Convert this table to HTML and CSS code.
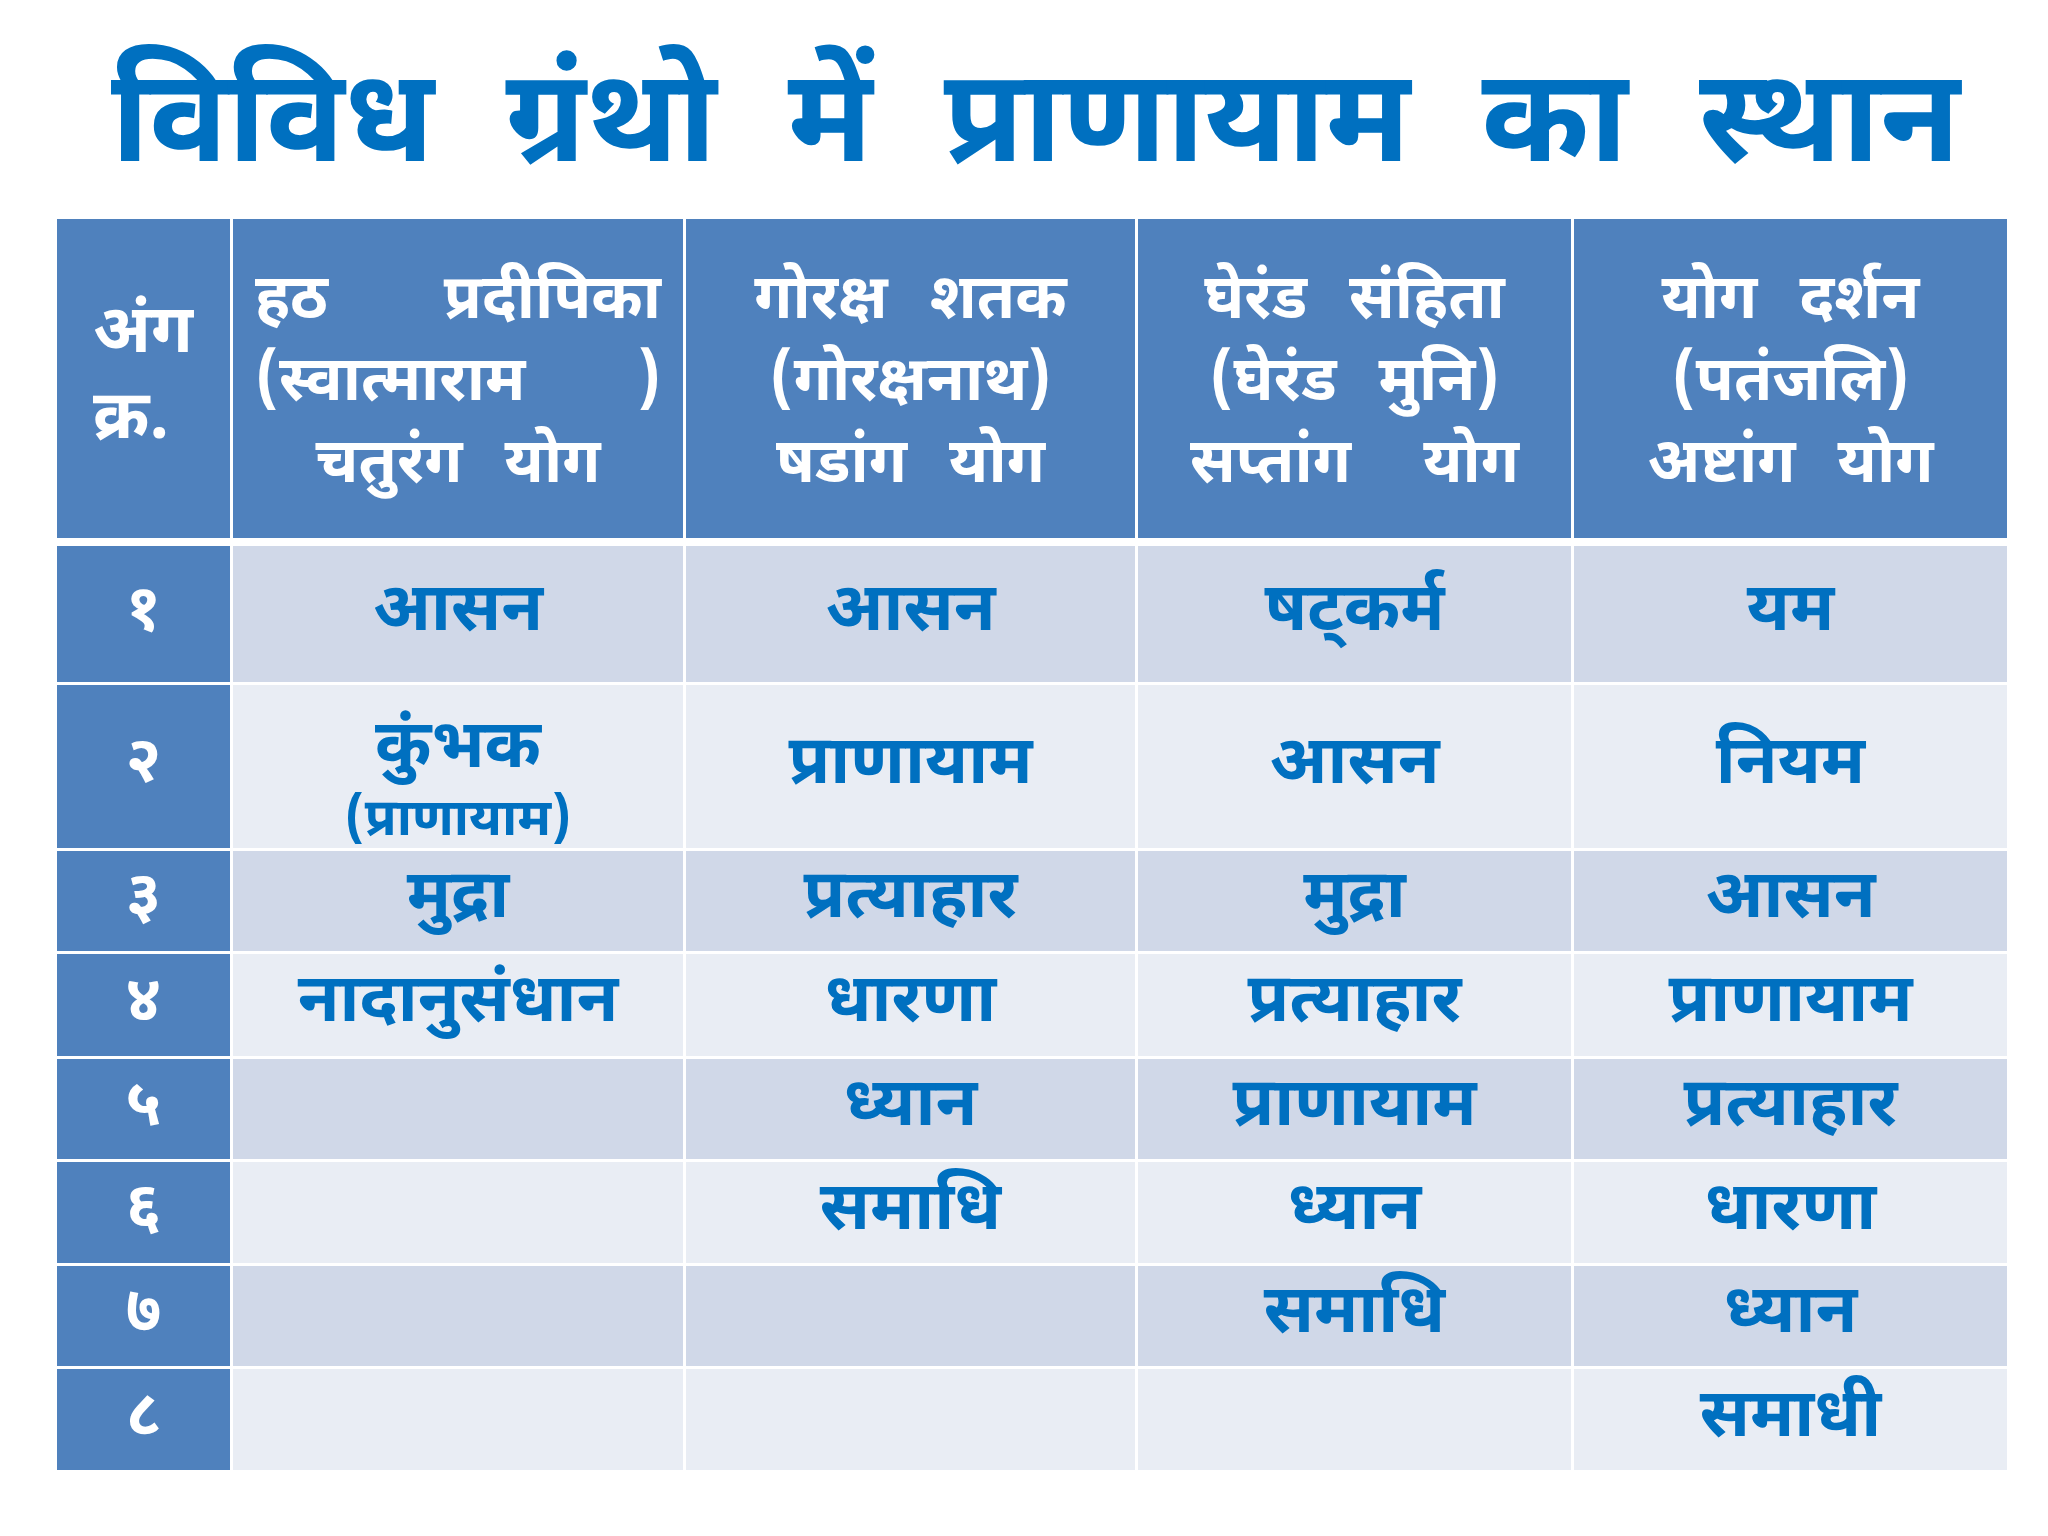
FILE: index.html
```html
<!DOCTYPE html>
<html lang="hi">
<head>
<meta charset="utf-8">
<title>विविध ग्रंथो में प्राणायाम का स्थान</title>
<link rel="stylesheet" href="styles.css">
</head>
<body>
<div class="page">
  <h1 class="title"><span>विविध</span><span>ग्रंथो</span><span>में</span><span>प्राणायाम</span><span>का</span><span>स्थान</span></h1>
  <div class="table">
    <div class="head">
      <div class="hcell first"><div>अंग</div><div>क्र.</div></div>
      <div class="hcell"><div class="spread"><span>हठ</span><span>प्रदीपिका</span></div><div class="spread"><span>(स्वात्माराम</span><span>)</span></div><div>चतुरंग योग</div></div>
      <div class="hcell"><div>गोरक्ष शतक</div><div>(गोरक्षनाथ)</div><div>षडांग योग</div></div>
      <div class="hcell"><div>घेरंड संहिता</div><div>(घेरंड मुनि)</div><div class="wide">सप्तांग योग</div></div>
      <div class="hcell"><div>योग दर्शन</div><div>(पतंजलि)</div><div>अष्टांग योग</div></div>
    </div>
    <div class="body">
      <div class="num">१</div><div class="cell odd">आसन</div><div class="cell odd">आसन</div><div class="cell odd">षट्कर्म</div><div class="cell odd">यम</div>
      <div class="num">२</div><div class="cell even stack"><div>कुंभक</div><div class="small">(प्राणायाम)</div></div><div class="cell even">प्राणायाम</div><div class="cell even">आसन</div><div class="cell even">नियम</div>
      <div class="num">३</div><div class="cell odd">मुद्रा</div><div class="cell odd">प्रत्याहार</div><div class="cell odd">मुद्रा</div><div class="cell odd">आसन</div>
      <div class="num">४</div><div class="cell even">नादानुसंधान</div><div class="cell even">धारणा</div><div class="cell even">प्रत्याहार</div><div class="cell even">प्राणायाम</div>
      <div class="num">५</div><div class="cell odd"></div><div class="cell odd">ध्यान</div><div class="cell odd">प्राणायाम</div><div class="cell odd">प्रत्याहार</div>
      <div class="num">६</div><div class="cell even"></div><div class="cell even">समाधि</div><div class="cell even">ध्यान</div><div class="cell even">धारणा</div>
      <div class="num">७</div><div class="cell odd"></div><div class="cell odd"></div><div class="cell odd">समाधि</div><div class="cell odd">ध्यान</div>
      <div class="num">८</div><div class="cell even"></div><div class="cell even"></div><div class="cell even"></div><div class="cell even">समाधी</div>
    </div>
  </div>
</div>
</body>
</html>
```
FILE: styles.css
```css
html, body {
  margin: 0;
  padding: 0;
  background: #ffffff;
}
body {
  font-family: "Noto Sans Devanagari", "Lohit Devanagari", "Noto Sans", sans-serif;
  font-weight: 700;
}
.page {
  width: 2048px;
  height: 1536px;
  padding: 0 42px 0 57px;
  box-sizing: border-box;
}
.title {
  margin: 0;
  height: 219px;
  display: flex;
  justify-content: space-between;
  align-items: center;
  padding: 40px 46px 0 54px;
  font-size: 130px;
  font-weight: 700;
  color: #0070c0;
  line-height: 1;
  box-sizing: border-box;
}
.table {
  display: flex;
  flex-direction: column;
  gap: 8px;
}
.head, .body {
  display: grid;
  grid-template-columns: 173px 450px 449px 433px 433px;
  column-gap: 3px;
}
.head {
  height: 319px;
}
.body {
  grid-template-rows: 136px 163px 100px 102px 100px 101px 100px 101px;
  row-gap: 3px;
}
.hcell {
  background: #4f81bd;
  color: #ffffff;
  font-size: 62px;
  line-height: 82px;
  word-spacing: 26px;
  display: flex;
  flex-direction: column;
  justify-content: center;
  text-align: center;
  padding: 12px 22px 0;
  white-space: nowrap;
}
.hcell.first {
  text-align: left;
  padding: 0 0 0 36px;
  font-size: 68px;
  line-height: 86px;
}
.spread {
  display: flex;
  justify-content: space-between;
}
.wide {
  word-spacing: 56px;
}
.num {
  background: #4f81bd;
  color: #ffffff;
  font-size: 64px;
  display: flex;
  align-items: center;
  justify-content: center;
}
.cell {
  color: #0070c0;
  font-size: 68px;
  display: flex;
  align-items: center;
  justify-content: center;
  line-height: 1;
}
.cell.odd {
  background: #d0d8e8;
}
.cell.even {
  background: #e9edf4;
}
.cell.stack {
  flex-direction: column;
  justify-content: flex-start;
  padding-top: 24px;
}
.cell.stack > div {
  line-height: 84px;
}
.cell.stack > .small {
  font-size: 52px;
  line-height: 58px;
}
```
